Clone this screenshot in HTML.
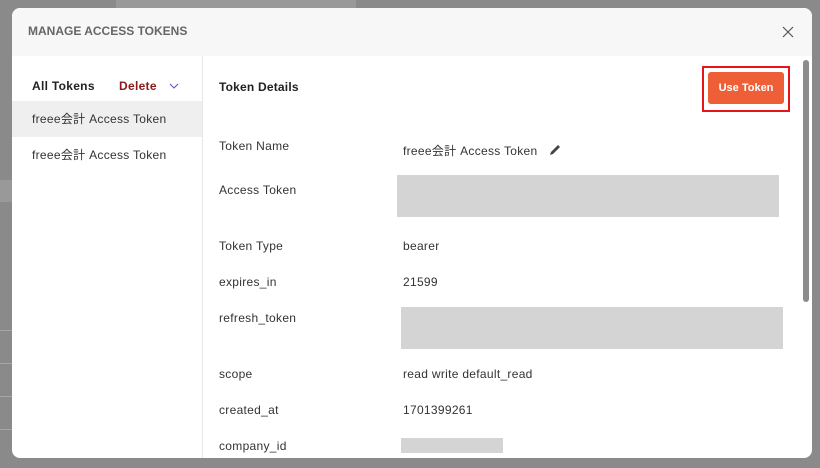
<!DOCTYPE html>
<html><head><style>
body{margin:0;width:820px;height:468px;background:#8a8a8a;font-family:"Liberation Sans","Noto Sans CJK JP",sans-serif;position:relative;overflow:hidden;font-size:12px;color:#333}
.a{position:absolute}
.modal{left:12px;top:8px;width:800px;height:450px;background:#fff;border-radius:8px;overflow:hidden}
.hd{left:0;top:0;width:800px;height:48px;background:#f7f7f7}
.lbl{left:219px;color:#333;letter-spacing:0.3px}
.val{left:403px;color:#333;letter-spacing:0.3px}
.g{background:#d4d4d4}
</style></head><body>
<div class="a" style="left:116px;top:0;width:240px;height:8px;background:#999"></div>
<div class="a" style="left:0;top:180px;width:12px;height:22px;background:#999"></div>
<div class="a" style="left:0;top:330px;width:12px;height:1px;background:#a6a6a6"></div>
<div class="a" style="left:0;top:363px;width:12px;height:1px;background:#a6a6a6"></div>
<div class="a" style="left:0;top:396px;width:12px;height:1px;background:#a6a6a6"></div>
<div class="a" style="left:0;top:429px;width:12px;height:1px;background:#a6a6a6"></div>
<div class="a modal">
 <div class="a hd"></div>
 <div class="a" style="left:16px;top:16px;font-size:12px;font-weight:bold;color:#666">MANAGE ACCESS TOKENS</div>
 <svg class="a" style="left:770px;top:18px" width="12" height="12"><path d="M1 1L11 11M11 1L1 11" stroke="#555" stroke-width="1.2"/></svg>
 <div class="a" style="left:190px;top:48px;width:1px;height:402px;background:#e6e6e6"></div>
 <div class="a" style="left:20px;top:71px;font-weight:bold;color:#222;letter-spacing:0.3px">All Tokens</div>
 <div class="a" style="left:107px;top:71px;font-weight:bold;color:#8b1a1a;letter-spacing:0.3px">Delete</div>
 <svg class="a" style="left:157px;top:75px" width="10" height="6"><path d="M1 1L5 5L9 1" stroke="#5a4fcf" fill="none"/></svg>
 <div class="a" style="left:0;top:93px;width:190px;height:36px;background:#efefef"></div>
 <div class="a" style="left:20px;top:102px;color:#333;letter-spacing:0.3px">freee会計 Access Token</div>
 <div class="a" style="left:20px;top:138px;color:#333;letter-spacing:0.3px">freee会計 Access Token</div>
</div>
<div class="a" style="left:219px;top:80px;font-weight:bold;color:#222;letter-spacing:0.2px">Token Details</div>
<div class="a" style="left:702px;top:66px;width:88px;height:46px;border:2px solid #e8141a;box-sizing:border-box"></div>
<div class="a" style="left:708px;top:72px;width:76px;height:32px;background:#ef5f37;border-radius:3px;color:#fff;font-weight:bold;font-size:11px;line-height:32px;text-align:center">Use Token</div>
<div class="a" style="left:803px;top:60px;width:6px;height:242px;background:#8c8c8c;border-radius:3px"></div>
<div class="a lbl" style="top:139px">Token Name</div>
<div class="a val" style="top:142px">freee会計 Access Token</div>
<svg class="a" style="left:548px;top:143px" width="14" height="14"><path d="M2 12L3 9L10 2L12 4L5 11Z" fill="#444"/></svg>
<div class="a lbl" style="top:183px">Access Token</div>
<div class="a g" style="left:397px;top:175px;width:382px;height:42px"></div>
<div class="a lbl" style="top:239px">Token Type</div><div class="a val" style="top:239px">bearer</div>
<div class="a lbl" style="top:275px">expires_in</div><div class="a val" style="top:275px">21599</div>
<div class="a lbl" style="top:311px">refresh_token</div>
<div class="a g" style="left:401px;top:307px;width:382px;height:42px"></div>
<div class="a lbl" style="top:367px">scope</div><div class="a val" style="top:367px">read write default_read</div>
<div class="a lbl" style="top:403px">created_at</div><div class="a val" style="top:403px">1701399261</div>
<div class="a lbl" style="top:439px">company_id</div>
<div class="a g" style="left:401px;top:438px;width:102px;height:15px"></div>
</body></html>
